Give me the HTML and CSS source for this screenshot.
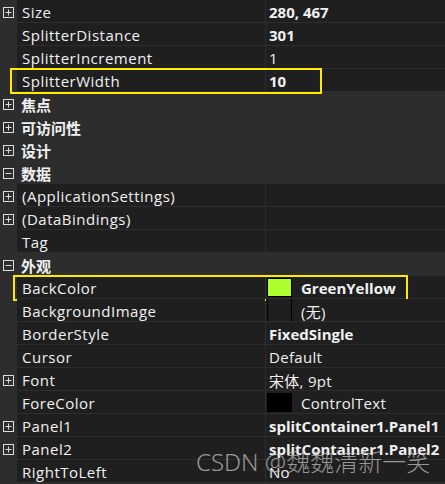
FILE: index.html
```html
<!DOCTYPE html>
<html>
<head>
<meta charset="utf-8">
<link rel="stylesheet" href="styles.css">
</head>
<body>
<div class="grid">
  <div class="row prop">
    <span class="glyph"><svg viewBox="0 0 11 11" width="11" height="11"><rect x="0.5" y="0.5" width="10" height="10" fill="none" stroke="#dcdcdc"/><path d="M2.5 5.5H8.5M5.5 2.5V8.5" stroke="#dcdcdc"/></svg></span>
    <span class="name">Size</span><span class="val b">280, 467</span>
  </div>
  <div class="row prop"><span class="glyph"></span><span class="name">SplitterDistance</span><span class="val b">301</span></div>
  <div class="row prop"><span class="glyph"></span><span class="name">SplitterIncrement</span><span class="val">1</span></div>
  <div class="row prop"><span class="glyph"></span><span class="name">SplitterWidth</span><span class="val b">10</span><span class="mark mark1"></span></div>
  <div class="row cat">
    <span class="glyph"><svg viewBox="0 0 11 11" width="11" height="11"><rect x="0.5" y="0.5" width="10" height="10" fill="none" stroke="#dcdcdc"/><path d="M2.5 5.5H8.5M5.5 2.5V8.5" stroke="#dcdcdc"/></svg></span>
    <span class="cname">焦点</span>
  </div>
  <div class="row cat">
    <span class="glyph"><svg viewBox="0 0 11 11" width="11" height="11"><rect x="0.5" y="0.5" width="10" height="10" fill="none" stroke="#dcdcdc"/><path d="M2.5 5.5H8.5M5.5 2.5V8.5" stroke="#dcdcdc"/></svg></span>
    <span class="cname">可访问性</span>
  </div>
  <div class="row cat">
    <span class="glyph"><svg viewBox="0 0 11 11" width="11" height="11"><rect x="0.5" y="0.5" width="10" height="10" fill="none" stroke="#dcdcdc"/><path d="M2.5 5.5H8.5M5.5 2.5V8.5" stroke="#dcdcdc"/></svg></span>
    <span class="cname">设计</span>
  </div>
  <div class="row cat">
    <span class="glyph"><svg viewBox="0 0 11 11" width="11" height="11"><rect x="0.5" y="0.5" width="10" height="10" fill="none" stroke="#dcdcdc"/><path d="M2.5 5.5H8.5" stroke="#dcdcdc"/></svg></span>
    <span class="cname">数据</span>
  </div>
  <div class="row prop">
    <span class="glyph"><svg viewBox="0 0 11 11" width="11" height="11"><rect x="0.5" y="0.5" width="10" height="10" fill="none" stroke="#dcdcdc"/><path d="M2.5 5.5H8.5M5.5 2.5V8.5" stroke="#dcdcdc"/></svg></span>
    <span class="name">(ApplicationSettings)</span><span class="val"></span>
  </div>
  <div class="row prop">
    <span class="glyph"><svg viewBox="0 0 11 11" width="11" height="11"><rect x="0.5" y="0.5" width="10" height="10" fill="none" stroke="#dcdcdc"/><path d="M2.5 5.5H8.5M5.5 2.5V8.5" stroke="#dcdcdc"/></svg></span>
    <span class="name">(DataBindings)</span><span class="val"></span>
  </div>
  <div class="row prop"><span class="glyph"></span><span class="name">Tag</span><span class="val"></span></div>
  <div class="row cat">
    <span class="glyph"><svg viewBox="0 0 11 11" width="11" height="11"><rect x="0.5" y="0.5" width="10" height="10" fill="none" stroke="#dcdcdc"/><path d="M2.5 5.5H8.5" stroke="#dcdcdc"/></svg></span>
    <span class="cname">外观</span>
  </div>
  <div class="row prop"><span class="glyph"></span><span class="name">BackColor</span><span class="val b"><i class="sw sw-green"></i>GreenYellow</span><span class="mark mark2"></span></div>
  <div class="row prop"><span class="glyph"></span><span class="name">BackgroundImage</span><span class="val"><i class="sw sw-empty"></i>(无)</span></div>
  <div class="row prop"><span class="glyph"></span><span class="name">BorderStyle</span><span class="val b">FixedSingle</span></div>
  <div class="row prop"><span class="glyph"></span><span class="name">Cursor</span><span class="val">Default</span></div>
  <div class="row prop">
    <span class="glyph"><svg viewBox="0 0 11 11" width="11" height="11"><rect x="0.5" y="0.5" width="10" height="10" fill="none" stroke="#dcdcdc"/><path d="M2.5 5.5H8.5M5.5 2.5V8.5" stroke="#dcdcdc"/></svg></span>
    <span class="name">Font</span><span class="val">宋体, 9pt</span>
  </div>
  <div class="row prop"><span class="glyph"></span><span class="name">ForeColor</span><span class="val"><i class="sw sw-black"></i>ControlText</span></div>
  <div class="row prop">
    <span class="glyph"><svg viewBox="0 0 11 11" width="11" height="11"><rect x="0.5" y="0.5" width="10" height="10" fill="none" stroke="#dcdcdc"/><path d="M2.5 5.5H8.5M5.5 2.5V8.5" stroke="#dcdcdc"/></svg></span>
    <span class="name">Panel1</span><span class="val b">splitContainer1.Panel1</span>
  </div>
  <div class="row prop">
    <span class="glyph"><svg viewBox="0 0 11 11" width="11" height="11"><rect x="0.5" y="0.5" width="10" height="10" fill="none" stroke="#dcdcdc"/><path d="M2.5 5.5H8.5M5.5 2.5V8.5" stroke="#dcdcdc"/></svg></span>
    <span class="name">Panel2</span><span class="val b">splitContainer1.Panel2</span>
  </div>
  <div class="row prop"><span class="glyph"></span><span class="name">RightToLeft</span><span class="val">No</span></div>
  <div class="watermark">CSDN @魏魏清新一笑</div>
</div>
</body>
</html>
```

FILE: styles.css
```css
html, body {
  margin: 0;
  padding: 0;
  background: #2d2d2d;
}
body {
  width: 445px;
  height: 484px;
  overflow: hidden;
  font-family: "Open Sans", "Noto Sans CJK SC", sans-serif;
  font-size: 15px;
  color: #f1f1f1;
}
.grid {
  position: relative;
  display: flex;
  flex-direction: column;
  gap: 1px;
}
.row {
  position: relative;
  display: grid;
  height: 22px;
}
.row.prop {
  grid-template-columns: 16px 248px 1fr;
  column-gap: 1px;
}
.row.cat {
  grid-template-columns: 16px 1fr;
}
.glyph {
  display: flex;
  align-items: center;
  padding-left: 3px;
  padding-top: 3px;
}
.glyph svg { display: block; }
.name, .val, .cname {
  display: flex;
  align-items: center;
  white-space: nowrap;
  overflow: hidden;
  box-sizing: border-box;
  padding-top: 2px;
}
.name {
  background: #1f1f1f;
  padding-left: 5px;
  letter-spacing: 0.5px;
}
.val {
  background: #1f1f1f;
  padding-left: 3px;
  letter-spacing: 0.3px;
}
.cname {
  padding-left: 5px;
  font-weight: bold;
}
.b { font-weight: bold; letter-spacing: 0; }
.sw {
  display: inline-block;
  box-sizing: border-box;
  width: 25px;
  height: 19px;
  margin-left: -2px;
  margin-right: 9px;
  margin-top: -2px;
  border: 1px solid #000;
}
.sw-green { background: #adff2f; }
.sw-empty { background: transparent; height: 24px; border-top: none; border-bottom: none; }
.sw-black { background: #000; }
.mark {
  position: absolute;
  border: 2px solid #ffea00;
  box-sizing: border-box;
  pointer-events: none;
}
.mark1 { left: 10px; top: -1px; width: 312px; height: 26px; }
.mark2 { left: 13px; top: -1px; width: 395px; height: 26px; }
.watermark {
  position: absolute;
  left: 196px;
  top: 443px;
  font-family: "Noto Sans", "Noto Sans CJK SC", sans-serif;
  font-size: 24px;
  font-weight: 300;
  color: rgba(200, 200, 200, 0.72);
  white-space: nowrap;
}
```
